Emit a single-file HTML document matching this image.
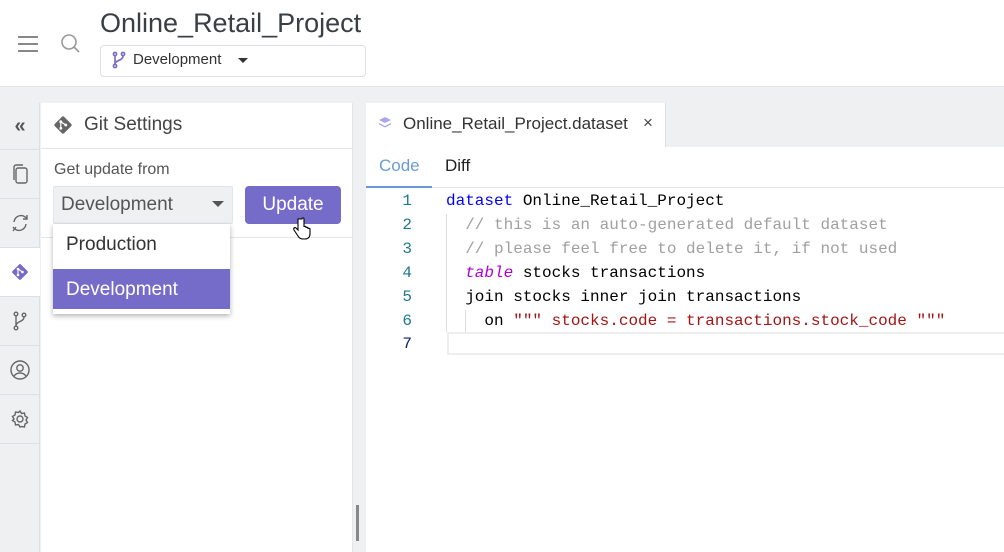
<!DOCTYPE html>
<html><head><style>
*{box-sizing:border-box;margin:0;padding:0}
body{width:1004px;height:552px;overflow:hidden;background:#eef0f2;font-family:"Liberation Sans",sans-serif;position:relative;color:#333}
.abs{position:absolute}
.hdr{left:0;top:0;width:1004px;height:87px;background:#fff;border-bottom:1px solid #e3e5e8}
.side{left:0;top:103px;width:40px;height:449px;background:#eef0f2;border-right:1px solid #dcdfe3}
.si{position:absolute;left:0;width:40px;height:49px;border-bottom:1px solid #dcdfe3;display:flex;align-items:center;justify-content:center}
.mono{font-family:"Liberation Mono",monospace;font-size:16px}
.ln{position:absolute;left:366px;width:46px;text-align:right;color:#237893}
.cl{position:absolute;left:446px;white-space:pre;color:#000}
</style></head><body>
<div class="abs hdr"></div>
<div class="abs" style="left:18px;top:36px;width:20px;height:2px;background:#888;box-shadow:0 7px 0 #888,0 14px 0 #888"></div>
<svg class="abs" style="left:59px;top:32px" width="24" height="24" viewBox="0 0 24 24"><circle cx="10" cy="10" r="7" fill="none" stroke="#999" stroke-width="1.6"/><path d="M15 15l5 5" stroke="#999" stroke-width="1.6"/></svg>
<div class="abs" style="left:100px;top:8px;font-size:27px;color:#3a3f45">Online_Retail_Project</div>
<div class="abs" style="left:100px;top:45px;width:266px;height:32px;border:1px solid #dcdfe3;border-radius:4px"></div>
<svg class="abs" style="left:112px;top:51px" width="14" height="18" viewBox="0 0 14 18"><g fill="none" stroke="#756bc8" stroke-width="1.6"><circle cx="3" cy="3" r="1.6"/><circle cx="11" cy="3" r="1.6"/><circle cx="3" cy="15" r="1.6"/><path d="M3 5v8M11 5c0 5-8 4-8 8"/></g></svg>
<div class="abs" style="left:133px;top:51px;font-size:15px;color:#333">Development</div>
<div class="abs" style="left:238px;top:58px;border:5px solid transparent;border-top:5px solid #333;border-bottom:0"></div>

<div class="abs side">
<div class="si" style="top:0;height:47px;font-size:20px;color:#555;font-weight:bold">«</div>
<div class="si" style="top:47px"><svg width="20" height="22" viewBox="0 0 20 22"><g fill="none" stroke="#666" stroke-width="1.4"><rect x="6" y="5" width="11" height="15" rx="2"/><path d="M4 17V4a2 2 0 012-2h7"/></g></svg></div>
<div class="si" style="top:96px"><svg width="22" height="22" viewBox="0 0 22 22"><g fill="none" stroke="#666" stroke-width="1.4"><path d="M5 10a7 7 0 0113-3M17 12a7 7 0 01-13 3M18 3v4h-4M4 19l3-4"/></g></svg></div>
<div class="si" style="top:145px;background:#fff"><svg width="20" height="20" viewBox="0 0 20 20"><rect x="4" y="4" width="12" height="12" transform="rotate(45 10 10)" fill="#756bc8" rx="1.5"/><g fill="#fff"><circle cx="8" cy="7" r="1.3"/><circle cx="8" cy="13" r="1.3"/><circle cx="12.5" cy="10" r="1.3"/></g><path d="M8 7v6M8 7l4.5 3" stroke="#fff" stroke-width="1.1"/></svg></div>
<div class="si" style="top:194px"><svg width="14" height="20" viewBox="0 0 14 20"><g fill="none" stroke="#666" stroke-width="1.4"><circle cx="3" cy="3" r="1.8"/><circle cx="11" cy="4" r="1.8"/><circle cx="3" cy="17" r="1.8"/><path d="M3 5v10M11 6c0 5-8 4-8 9"/></g></svg></div>
<div class="si" style="top:243px"><svg width="22" height="22" viewBox="0 0 22 22"><g fill="none" stroke="#666" stroke-width="1.4"><circle cx="11" cy="11" r="9"/><circle cx="11" cy="9" r="3.2"/><path d="M5 17c3-4 9-4 12 0"/></g></svg></div>
<div class="si" style="top:292px"><svg width="20" height="20" viewBox="0 0 20 20"><g fill="none" stroke="#666" stroke-width="1.4"><circle cx="10" cy="10" r="3"/><path d="M10 2l1.5 2.5 3-.5.5 3 2.5 1.5-1.5 2.5 1.5 2.5-2.5 1.5-.5 3-3-.5L10 18l-1.5-2.5-3 .5-.5-3L2.5 11.5 4 10 2.5 7.5 5 6l.5-3 3 .5z"/></g></svg></div>
</div>

<div class="abs" style="left:41px;top:103px;width:312px;height:449px;background:#fff;border-right:1px solid #e3e5e8"></div>
<div class="abs" style="left:41px;top:148px;width:312px;height:1px;background:#e3e5e8"></div>
<svg class="abs" style="left:52px;top:114px" width="22" height="22" viewBox="0 0 20 20"><rect x="4" y="4" width="12" height="12" transform="rotate(45 10 10)" fill="#666" rx="1.5"/><g fill="#fff"><circle cx="8" cy="7" r="1.3"/><circle cx="8" cy="13" r="1.3"/><circle cx="12.5" cy="10" r="1.3"/></g><path d="M8 7v6M8 7l4.5 3" stroke="#fff" stroke-width="1.1"/></svg>
<div class="abs" style="left:84px;top:114px;font-size:19px;color:#444">Git Settings</div>
<div class="abs" style="left:54px;top:161px;font-size:16px;color:#555">Get update from</div>
<div class="abs" style="left:53px;top:186px;width:180px;height:38px;background:#eef0f2;border:1px solid #e3e5e8;border-radius:2px"></div>
<div class="abs" style="left:61px;top:194px;font-size:19px;color:#555">Development</div>
<div class="abs" style="left:212px;top:201px;border:6px solid transparent;border-top:6px solid #555;border-bottom:0"></div>
<div class="abs" style="left:245px;top:186px;width:96px;height:38px;background:#756bc8;border-radius:4px;color:#fff;font-size:19px;text-align:center;line-height:37px">Update</div>
<div class="abs" style="left:41px;top:237px;width:312px;height:1px;background:#e3e5e8"></div>
<div class="abs" style="left:53px;top:224px;width:177px;height:90px;background:#fff;box-shadow:0 2px 5px rgba(0,0,0,.3)"></div>
<div class="abs" style="left:66px;top:234px;font-size:19px;color:#333">Production</div>
<div class="abs" style="left:53px;top:269px;width:177px;height:40px;background:#756bc8"></div>
<div class="abs" style="left:66px;top:279px;font-size:19px;color:#fff">Development</div>
<svg class="abs" style="left:292px;top:217px" width="20" height="24" viewBox="0 0 20 24"><path d="M6 2v11l-2-2c-1-1-3 0-2 2l4 6c1 2 3 3 5 3h2c3 0 5-2 5-5v-5c0-1-2-1-2 0v-1c0-1-2-1-2 0v-1c0-1-2-1-2 0V2c0-1.5-2-1.5-2 0z" fill="#fff" stroke="#000" stroke-width="1.1"/></svg>

<div class="abs" style="left:356px;top:505px;width:3px;height:36px;background:#888"></div>
<div class="abs" style="left:366px;top:103px;width:638px;height:449px;background:#fff"></div>
<div class="abs" style="left:666px;top:103px;width:338px;height:44px;background:#eef0f2"></div>
<div class="abs" style="left:665px;top:103px;width:1px;height:44px;background:#dcdfe3"></div>
<svg class="abs" style="left:378px;top:116px" width="14" height="14" viewBox="0 0 14 14"><g fill="#aaa6f0"><path d="M7 1l6 3-6 3-6-3z"/><path d="M1 7l6 3 6-3v1.5l-6 3-6-3z"/></g></svg>
<div class="abs" style="left:403px;top:114px;font-size:17px;color:#333">Online_Retail_Project.dataset</div>
<div class="abs" style="left:643px;top:113px;font-size:17px;color:#444">×</div>
<div class="abs" style="left:366px;top:187px;width:638px;height:1px;background:#e3e5e8"></div>
<div class="abs" style="left:366px;top:186px;width:66px;height:2px;background:#6a9bd8"></div>
<div class="abs" style="left:379px;top:156px;font-size:17px;color:#6a9bd8">Code</div>
<div class="abs" style="left:445px;top:156px;font-size:17px;color:#222">Diff</div>

<div class="mono">
<div class="ln" style="top:192px">1</div><div class="ln" style="top:216px">2</div><div class="ln" style="top:240px">3</div><div class="ln" style="top:264px">4</div><div class="ln" style="top:288px">5</div><div class="ln" style="top:312px">6</div><div class="ln" style="top:335px;color:#0b216f">7</div>
<div class="abs" style="left:446px;top:214px;width:1px;height:118px;background:#ddd"></div>
<div class="abs" style="left:465px;top:310px;width:1px;height:22px;background:#ddd"></div>
<div class="abs" style="left:447px;top:332px;width:557px;height:23px;border:2px solid #eee;border-right:0"></div>
<div class="cl" style="top:192px"><span style="color:#0000ff">dataset</span> Online_Retail_Project</div>
<div class="cl" style="top:216px;color:#a0a0a0">  // this is an auto-generated default dataset</div>
<div class="cl" style="top:240px;color:#a0a0a0">  // please feel free to delete it, if not used</div>
<div class="cl" style="top:264px">  <i style="color:#af00db">table</i> stocks transactions</div>
<div class="cl" style="top:288px">  join stocks inner join transactions</div>
<div class="cl" style="top:312px">    on <span style="color:#a31515">""" stocks.code = transactions.stock_code """</span></div>
</div>
</body></html>
